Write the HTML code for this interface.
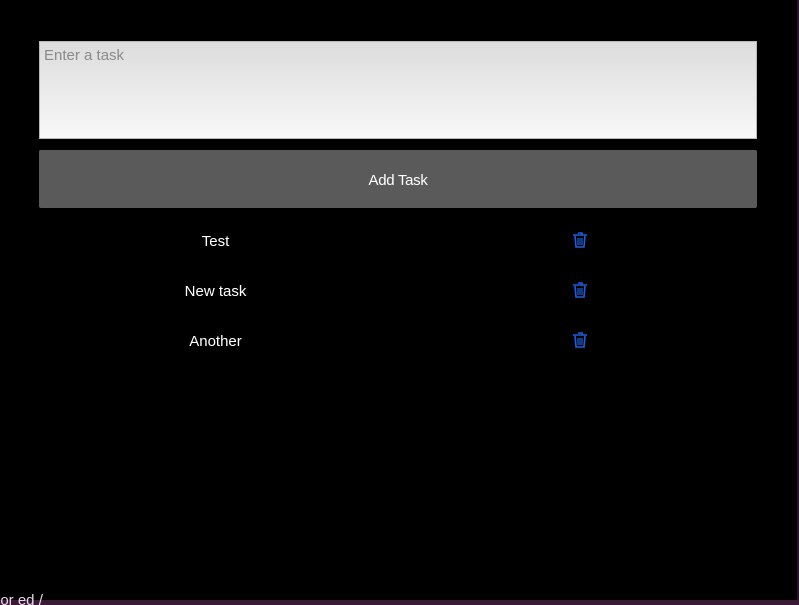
<!DOCTYPE html>
<html><head><style>
html,body{margin:0;padding:0;width:799px;height:605px;background:#000;overflow:hidden;font-family:"Liberation Sans","DejaVu Sans",sans-serif;position:relative}
.ta{position:absolute;left:39px;top:41px;width:716px;height:96px;border:1px solid #b8b8b8;background:linear-gradient(#dcdcdc,#f8f8f8);}
.ta span{position:absolute;left:4px;top:5px;font-size:15px;color:#8a8a8a}
.btn{position:absolute;left:39px;top:150px;width:718px;height:58px;background:#5a5a5a;color:#fff;font-size:15px;text-align:center;line-height:62px;border-radius:2px;letter-spacing:-0.3px}
.item{position:absolute;left:0;width:431px;text-align:center;color:#fff;font-size:15px}
.ic{position:absolute;left:572px}
.bar{position:absolute;left:0;top:600px;width:799px;height:5px;background:#3b1a36}
.rl{position:absolute;left:797px;top:0;width:2px;height:605px;background:#2a1228}
.bt{position:absolute;left:-3px;top:592px;font-size:15px;color:#e8d8e8;line-height:18px}
</style></head><body>
<div class="ta"><span>Enter a task</span></div>
<div class="btn">Add Task</div>
<div class="item" style="top:233px">Test</div>
<div class="item" style="top:283px">New task</div>
<div class="item" style="top:333px">Another</div>
<svg class="ic" style="top:232px" width="16" height="16" viewBox="0 0 16 16"><path d="M1 3h14M6 1h4v2M3 4l1 11h8l1-11" fill="none" stroke="#1a5fe0" stroke-width="1.6"/><path d="M6 6v7M8 6v7M10 6v7" stroke="#1a5fe0" stroke-width="1.2"/></svg>
<svg class="ic" style="top:282px" width="16" height="16" viewBox="0 0 16 16"><path d="M1 3h14M6 1h4v2M3 4l1 11h8l1-11" fill="none" stroke="#1a5fe0" stroke-width="1.6"/><path d="M6 6v7M8 6v7M10 6v7" stroke="#1a5fe0" stroke-width="1.2"/></svg>
<svg class="ic" style="top:332px" width="16" height="16" viewBox="0 0 16 16"><path d="M1 3h14M6 1h4v2M3 4l1 11h8l1-11" fill="none" stroke="#1a5fe0" stroke-width="1.6"/><path d="M6 6v7M8 6v7M10 6v7" stroke="#1a5fe0" stroke-width="1.2"/></svg>
<div class="rl"></div>
<div class="bar"></div>
<div class="bt">lor ed /</div>
</body></html>
